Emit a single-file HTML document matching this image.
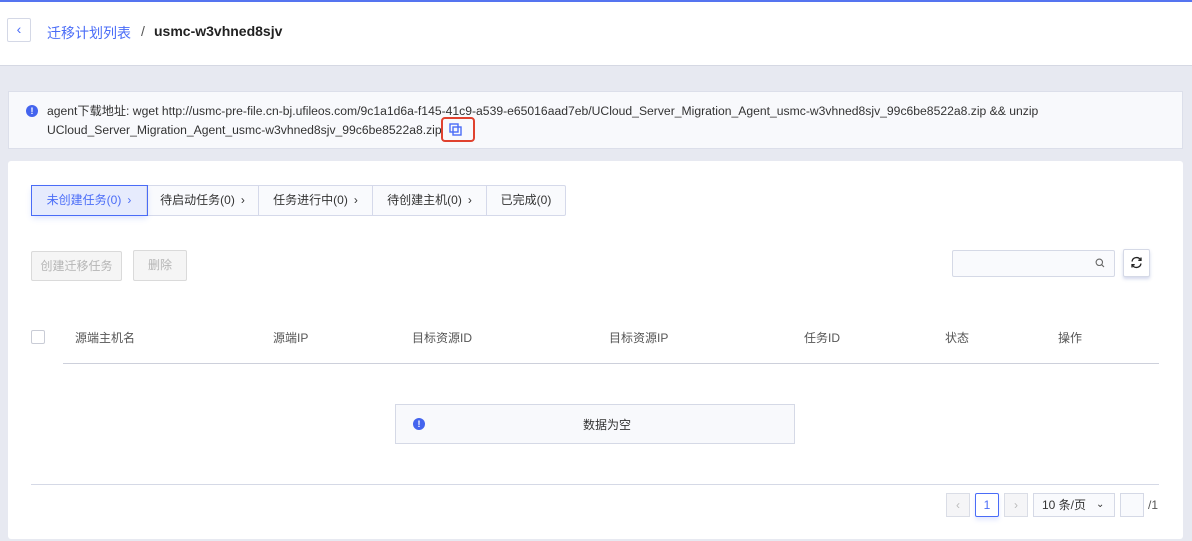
<!DOCTYPE html>
<html><head><meta charset="utf-8"><style>
*{box-sizing:border-box;margin:0;padding:0}
body{width:1192px;height:541px;overflow:hidden;background:#e7e9f1;font-family:"Liberation Sans","Noto Sans CJK SC",sans-serif;font-size:12px;color:#333;position:relative}
.abs{position:absolute}
.top{left:0;top:0;width:1192px;height:66px;background:#fff;border-bottom:1px solid #d5d8e3}
.topline{left:0;top:0;width:1192px;height:2px;background:#5574f0}
.back{left:7px;top:18px;width:24px;height:24px;border:1px solid #d4d8e6;border-radius:2px;color:#4a6cf7;text-align:center;line-height:20px;font-size:14px}
.alert{left:8px;top:91px;width:1175px;height:58px;background:#f8f9fc;border:1px solid #dcdfea}
.card{left:8px;top:161px;width:1175px;height:378px;background:#fff;border-radius:3px}
.ico{width:12px;height:12px;border-radius:50%;background:#4464ee;color:#fff;font-size:9px;font-weight:bold;text-align:center;line-height:12px}
.tabs{left:31px;top:185px;height:31px;display:flex;border:1px solid #d5d9ea;border-radius:2px;background:#f9fafd}
.tab{line-height:29px;border-right:1px solid #d5d9ea;color:#333;font-size:12px;text-align:center;white-space:nowrap}
.tab:last-child{border-right:none}
.tab.on{background:#e6ebfd;color:#4a6cf7;outline:1px solid #4a6cf7;box-shadow:0 3px 6px rgba(74,108,247,.2)}
.tab span{margin-left:6px}
.btn{height:30px;border:1px solid #dadada;background:#f5f5f5;color:#b5b5b5;line-height:28px;text-align:center;border-radius:2px}
.th{top:329px;color:#555;font-size:12px}
</style></head><body>
<div class="abs top"></div><div class="abs topline"></div>
<div class="abs back">‹</div>
<div class="abs" style="left:47px;top:23px;font-size:14px;color:#4a6cf7">迁移计划列表</div>
<div class="abs" style="left:141px;top:23px;font-size:14px;color:#555">/</div>
<div class="abs" style="left:154px;top:23px;font-size:14px;font-weight:bold;color:#222">usmc-w3vhned8sjv</div>
<div class="abs alert"></div>
<div class="abs ico" style="left:26px;top:105px">!</div>
<div class="abs" style="left:47px;top:102px;line-height:19px;font-size:12.16px;color:#333;width:1125px">agent下载地址: wget http://usmc-pre-file.cn-bj.ufileos.com/9c1a1d6a-f145-41c9-a539-e65016aad7eb/UCloud_Server_Migration_Agent_usmc-w3vhned8sjv_99c6be8522a8.zip &amp;&amp; unzip<br>UCloud_Server_Migration_Agent_usmc-w3vhned8sjv_99c6be8522a8.zip</div>
<div class="abs" style="left:441px;top:117px;width:34px;height:25px;border:2px solid #e0422f;border-radius:4px"></div>
<svg class="abs" style="left:449px;top:123px" width="13" height="13" viewBox="0 0 13 13"><rect x="1" y="1" width="8" height="8" fill="none" stroke="#4a6cf7" stroke-width="1.4"/><rect x="4" y="4" width="8" height="8" fill="none" stroke="#4a6cf7" stroke-width="1.4"/></svg>
<div class="abs card"></div>
<div class="abs tabs"><div class="tab on" style="width:115px">未创建任务(0)<span>›</span></div><div class="tab" style="width:112px">待启动任务(0)<span>›</span></div><div class="tab" style="width:114px">任务进行中(0)<span>›</span></div><div class="tab" style="width:114px">待创建主机(0)<span>›</span></div><div class="tab" style="width:78px">已完成(0)</div></div>
<div class="abs btn" style="left:31px;top:251px;width:91px">创建迁移任务</div>
<div class="abs btn" style="left:133px;top:250px;width:54px;height:31px">删除</div>
<div class="abs" style="left:952px;top:250px;width:163px;height:27px;border:1px solid #d5d9e6;border-radius:2px;background:#f9fafd"></div>
<svg class="abs" style="left:1095px;top:258px" width="10" height="10" viewBox="0 0 10 10"><circle cx="4.3" cy="4.3" r="3.2" fill="none" stroke="#666" stroke-width="1.1"/><path d="M6.7 6.7L9 9" stroke="#666" stroke-width="1.1"/></svg>
<div class="abs" style="left:1123px;top:249px;width:27px;height:28px;border:1px solid #d5d9e6;border-radius:2px;background:#fff;box-shadow:0 2px 3px rgba(80,100,180,.25)"></div>
<svg class="abs" style="left:1130px;top:256px" width="13" height="13" viewBox="0 0 13 13" fill="none" stroke="#222" stroke-width="1.3"><path d="M2 5.5A4.6 4.6 0 0 1 10.6 4"/><path d="M11 1.5V4.3H8.3"/><path d="M11 7.5A4.6 4.6 0 0 1 2.4 9"/><path d="M2 11.5V8.7H4.7"/></svg>
<div class="abs" style="left:31px;top:330px;width:14px;height:14px;border:1px solid #c9ccd6;border-radius:2px"></div>
<div class="abs th" style="left:75px">源端主机名</div>
<div class="abs th" style="left:273px">源端IP</div>
<div class="abs th" style="left:412px">目标资源ID</div>
<div class="abs th" style="left:609px">目标资源IP</div>
<div class="abs th" style="left:804px">任务ID</div>
<div class="abs th" style="left:945px">状态</div>
<div class="abs th" style="left:1058px">操作</div>
<div class="abs" style="left:63px;top:363px;width:1096px;height:1px;background:#cdd0db"></div>
<div class="abs" style="left:395px;top:404px;width:400px;height:40px;border:1px solid #d5d9e6;background:#f8f9fc"></div>
<div class="abs ico" style="left:413px;top:418px">!</div>
<div class="abs" style="left:583px;top:416px;color:#333">数据为空</div>
<div class="abs" style="left:31px;top:484px;width:1128px;height:1px;background:#d5d9e6"></div>
<div class="abs" style="left:946px;top:493px;width:24px;height:24px;border:1px solid #dadde6;background:#f5f5f7;color:#bbb;text-align:center;line-height:22px">‹</div>
<div class="abs" style="left:975px;top:493px;width:24px;height:24px;border:1px solid #4a6cf7;border-radius:2px;background:#fff;color:#4a6cf7;text-align:center;line-height:22px;box-shadow:0 3px 5px rgba(74,108,247,.15)">1</div>
<div class="abs" style="left:1004px;top:493px;width:24px;height:24px;border:1px solid #dadde6;background:#f5f5f7;color:#bbb;text-align:center;line-height:22px">›</div>
<div class="abs" style="left:1033px;top:493px;width:82px;height:24px;border:1px solid #d5d9e6;background:#f9fafd;color:#333;line-height:22px;padding-left:8px">10 条/页 <span style="position:absolute;left:62px;font-size:10px">⌄</span></div>
<div class="abs" style="left:1120px;top:493px;width:24px;height:24px;border:1px solid #d5d9e6;background:#f9fafd"></div>
<div class="abs" style="left:1148px;top:498px;color:#555">/1</div>
</body></html>
